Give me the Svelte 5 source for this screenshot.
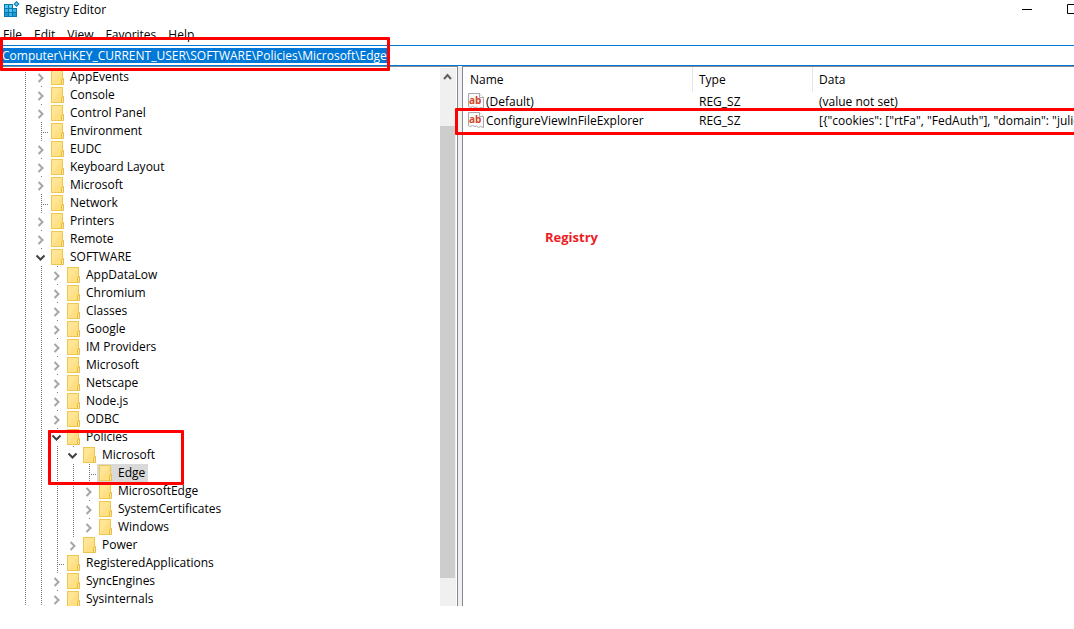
<script lang="ts">
  type Key = { name: string; open?: boolean; leaf?: boolean; children?: Key[] };

  const key = (name: string): Key => ({ name });
  const leaf = (name: string): Key => ({ name, leaf: true });

  const path = 'Computer\\HKEY_CURRENT_USER\\SOFTWARE\\Policies\\Microsoft\\Edge';
  const menus = ['File', 'Edit', 'View', 'Favorites', 'Help'];

  let selected = $state('Edge');
  let keys: Key[] = $state([
    key('AppEvents'),
    key('Console'),
    key('Control Panel'),
    leaf('Environment'),
    key('EUDC'),
    key('Keyboard Layout'),
    key('Microsoft'),
    leaf('Network'),
    key('Printers'),
    key('Remote'),
    {
      name: 'SOFTWARE',
      open: true,
      children: [
        key('AppDataLow'),
        key('Chromium'),
        key('Classes'),
        key('Google'),
        key('IM Providers'),
        key('Microsoft'),
        key('Netscape'),
        key('Node.js'),
        key('ODBC'),
        {
          name: 'Policies',
          open: true,
          children: [
            {
              name: 'Microsoft',
              open: true,
              children: [
                leaf('Edge'),
                key('MicrosoftEdge'),
                key('SystemCertificates'),
                key('Windows'),
              ],
            },
            key('Power'),
          ],
        },
        leaf('RegisteredApplications'),
        key('SyncEngines'),
        key('Sysinternals'),
      ],
    },
  ]);

  const values = [
    { name: '(Default)', type: 'REG_SZ', data: '(value not set)' },
    {
      name: 'ConfigureViewInFileExplorer',
      type: 'REG_SZ',
      data: '[{"cookies": ["rtFa", "FedAuth"], "domain": "juliew',
    },
  ];
</script>

{#snippet folder()}
  <svg class="folder" width="16" height="18" viewBox="0 0 16 18" aria-hidden="true">
    <rect x="2.5" y="1.5" width="11" height="15" fill="#ffe594" stroke="#ecc850" />
    <path d="M3 16L13 2v14z" fill="#ffdf82" />
    <path d="M12.5 16.5v-5l2-1v6z" fill="#ffe9a6" stroke="#e6bd42" />
  </svg>
{/snippet}

{#snippet branch(items: Key[], depth: number)}
  {#each items as item}
    <li>
      <div class="row">
        {#each { length: depth + 1 } as _}
          <span class="guide"></span>
        {/each}
        {#if item.leaf}
          <span class="guide stub"></span>
        {:else}
          <button
            class="toggle"
            aria-label="{item.open ? 'Collapse' : 'Expand'} {item.name}"
            aria-expanded={!!item.open}
            onclick={() => (item.open = !item.open)}
          >
            <svg width="16" height="18" viewBox="0 0 16 18" fill="none" stroke-width="2">
              {#if item.open}
                <path d="M3.500 7.500l4 4 4-4" stroke="#404040" />
              {:else}
                <path d="M5.500 6l4 4-4 4" stroke="#a6a6a6" />
              {/if}
            </svg>
          </button>
        {/if}
        <button
          class="key"
          class:selected={selected === item.name}
          onclick={() => (selected = item.name)}
        >
          {@render folder()}<span>{item.name}</span>
        </button>
      </div>
      {#if item.open && item.children}
        <ul>{@render branch(item.children, depth + 1)}</ul>
      {/if}
    </li>
  {/each}
{/snippet}

<div class="window">
  <header class="titlebar">
    <svg width="16" height="16" viewBox="0 0 16 16" aria-hidden="true">
      <path d="M0 3h9v4h4v9H0z" fill="#0b79ad" />
      <path d="M1 4h3v3H1zM5 4h3v3H5zM5 8h3v3H5z" fill="#52c9f2" />
      <path d="M1 8h3v3H1zM9 8h3v3H9zM5 12h3v3H5z" fill="#38b3e3" />
      <path d="M1 12h3v3H1zM9 12h3v3H9z" fill="#1d99cf" />
      <path d="M12.500 0L15.500 3l-3 3-3-3z" fill="#0b79ad" />
      <path d="M12.500 1.500L14 3l-1.500 1.500L11 3z" fill="#61cdf3" />
    </svg>
    <h1>Registry Editor</h1>
    <div class="controls">
      <button aria-label="Minimize">
        <svg width="12" height="12" viewBox="0 0 12 12"><path d="M1 5.500h10" /></svg>
      </button>
      <button aria-label="Maximize">
        <svg width="12" height="12" viewBox="0 0 12 12"><path d="M.5.5h9v9h-9z" /></svg>
      </button>
    </div>
  </header>

  <nav class="menu">
    {#each menus as menu}
      <button>{menu}</button>
    {/each}
  </nav>

  <div class="address">
    <input aria-label="Address" value={path} size="58" spellcheck="false" />
    <div class="mark mark-address"></div>
  </div>

  <main>
    <section class="tree">
      <ul class="keys">{@render branch(keys, 0)}</ul>
      <div class="scrollbar" aria-hidden="true">
        <svg width="15" height="17" viewBox="0 0 15 17"><path d="M4 11l3.500-4 3.500 4" /></svg>
        <div class="thumb"></div>
      </div>
      <div class="mark mark-key"></div>
    </section>

    <section class="values">
      <table>
        <colgroup><col class="col-name" /><col class="col-type" /><col /></colgroup>
        <thead>
          <tr><th>Name</th><th>Type</th><th>Data</th></tr>
        </thead>
        <tbody>
          {#each values as value}
            <tr>
              <td>
                <div class="name">
                  <svg width="16" height="16" viewBox="0 0 16 16" aria-hidden="true">
                    <path
                      d="M.5.5h11l4 4v11l-3-1-2 1-2-1.500-2 .5-2-1-2 1-2-1z"
                      fill="#fafafa"
                      stroke="#a8a8a8"
                    />
                    <path d="M11.500.5v4h4" fill="#fff" stroke="#a8a8a8" />
                    <text x="1" y="11">ab</text>
                  </svg>
                  {value.name}
                </div>
              </td>
              <td>{value.type}</td>
              <td>{value.data}</td>
            </tr>
          {/each}
        </tbody>
      </table>
      <strong class="note">Registry</strong>
      <div class="mark mark-value"></div>
    </section>
  </main>
</div>

<style>
  :global(body) {
    background: #fff;
    overflow: hidden;
  }
  .window {
    box-sizing: border-box;
    display: flex;
    flex-direction: column;
    height: 100vh;
    padding-bottom: 23px;
    font: 12px/18px 'Open Sans', 'Noto Sans', sans-serif;
    color: #000;
  }
  button,
  input {
    margin: 0;
    padding: 0;
    border: 0;
    background: none;
    font: inherit;
    color: inherit;
  }
  ul {
    margin: 0;
    padding: 0;
    list-style: none;
  }

  .titlebar {
    display: flex;
    flex: none;
    align-items: center;
    height: 20px;
    padding-left: 4px;
  }
  .titlebar > svg {
    align-self: flex-start;
    margin-top: 1px;
  }
  h1 {
    flex: 1;
    margin: 0 0 0 5px;
    font-size: 12px;
    font-weight: 400;
  }
  /* The maximize button runs off the right edge of the window. */
  .controls {
    display: flex;
    width: 70px;
    overflow: hidden;
  }
  .controls button {
    display: flex;
    flex: none;
    align-items: center;
    justify-content: center;
    width: 46px;
    height: 18px;
  }
  .controls path {
    fill: none;
    stroke: #000;
  }

  .menu {
    display: flex;
    flex: none;
    gap: 12px;
    height: 25px;
    padding: 0 3px;
    align-items: flex-end;
    box-sizing: border-box;
  }
  .menu button {
    height: 20px;
  }

  .address {
    position: relative;
    z-index: 2;
    flex: none;
    padding: 2px;
    border: solid #0078d7;
    border-width: 1px 0;
  }
  .address input {
    display: block;
    field-sizing: content;
    height: 15px;
    line-height: 15px;
    background: #0078d7;
    color: #fff;
    outline: none;
  }

  main {
    display: flex;
    flex: 1;
    min-height: 0;
  }
  .tree,
  .values {
    position: relative;
    border-top: 1px solid #828790;
  }
  .tree {
    display: flex;
    flex: none;
    box-sizing: border-box;
    width: 458px;
    padding: 1px 1px 0 17px;
    border-right: 1px solid #828790;
  }
  .keys {
    flex: 1;
    overflow: hidden;
  }
  .row {
    display: flex;
    height: 18px;
  }
  .guide {
    width: 16px;
    background: repeating-linear-gradient(#777 0 1px, transparent 1px 2px) 8px 0 / 1px 100% no-repeat;
  }
  .stub {
    background:
      repeating-linear-gradient(#777 0 1px, transparent 1px 2px) 8px 0 / 1px 100% no-repeat,
      repeating-linear-gradient(90deg, #777 0 1px, transparent 1px 2px) 10px 10px / 6px 1px no-repeat;
  }
  .toggle {
    width: 16px;
    height: 18px;
    background: linear-gradient(#777, #777) 8px 0 / 1px 1px no-repeat;
  }
  .toggle svg,
  .folder {
    display: block;
  }
  .key {
    display: flex;
    padding-right: 3px;
    white-space: nowrap;
  }
  .key span {
    padding-left: 5px;
  }
  .key.selected {
    background: #d9d9d9;
  }

  .scrollbar {
    display: flex;
    flex-direction: column;
    width: 16px;
    background: #f0f0f0;
  }
  .scrollbar path {
    fill: none;
    stroke: #606060;
    stroke-width: 2;
  }
  .thumb {
    width: 15px;
    height: 84%;
    margin-top: 41px;
    background: #cdcdcd;
  }

  .values {
    flex: 1;
    min-width: 0;
    margin-left: 4px;
    border-left: 1px solid #828790;
    box-shadow: -4px 0 #f0f0f0;
  }
  table {
    width: 100%;
    table-layout: fixed;
    border-collapse: separate;
    border-spacing: 0;
    text-align: left;
    white-space: nowrap;
  }
  .col-name {
    width: 230px;
  }
  .col-type {
    width: 120px;
  }
  th {
    height: 25px;
    padding: 0 0 0 6px;
    font-weight: 400;
    border-right: 1px solid #e5e5e5;
  }
  th:first-child {
    padding-left: 7px;
  }
  th:last-child {
    border-right: 0;
  }
  td {
    height: 19px;
    padding: 0 0 0 6px;
  }
  td:first-child {
    padding-left: 5px;
  }
  .name {
    display: flex;
    gap: 2px;
  }
  .name svg {
    overflow: visible;
  }
  .name text {
    font: bold 10px 'Open Sans', sans-serif;
    fill: #d2472a;
  }

  /* Red callouts drawn over the window. */
  .mark {
    position: absolute;
    box-sizing: border-box;
    border: 3px solid #fe0000;
    border-radius: 1px;
    pointer-events: none;
  }
  .mark-address {
    top: -9px;
    left: 0;
    width: 390px;
    height: 34px;
  }
  .mark-key {
    top: 363px;
    left: 48px;
    width: 136px;
    height: 55px;
  }
  .mark-value {
    top: 41px;
    right: -3px;
    left: -8px;
    height: 27px;
  }
  .note {
    position: absolute;
    top: 161px;
    left: 82px;
    font-size: 13px;
    color: #ed1c24;
  }
</style>
